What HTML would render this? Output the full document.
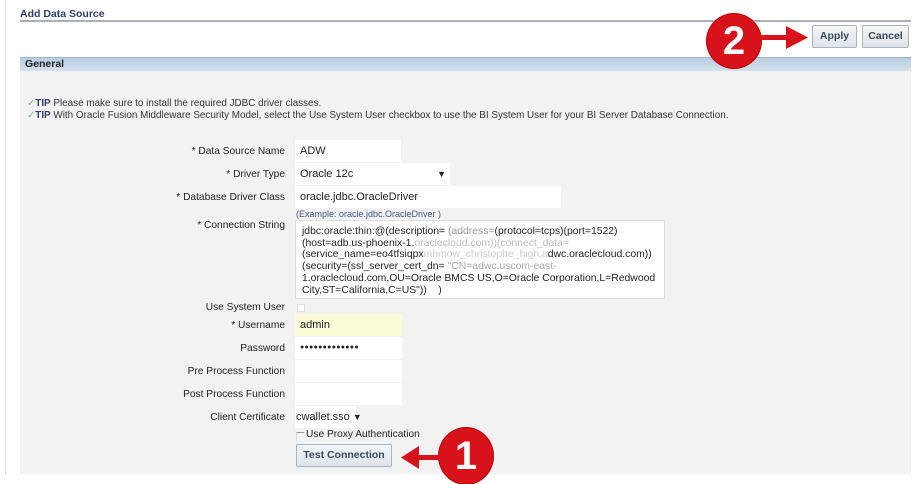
<!DOCTYPE html>
<html><head><meta charset="utf-8"><style>
*{margin:0;padding:0;box-sizing:border-box}
body{width:919px;height:482px;background:#fff;font-family:"Liberation Sans",sans-serif;font-size:10.5px;color:#222;position:relative;overflow:hidden}
.a{position:absolute}
.lbl{position:absolute;right:634px;text-align:right;white-space:nowrap;font-size:10.2px}
.inp{position:absolute;background:#fff;left:295px;height:22px;font-size:11px;padding:0 0 0 5px;line-height:22px;white-space:nowrap}
.btn{position:absolute;border:1px solid #a9b3bd;border-radius:2px;background:linear-gradient(#f4f6f8,#dfe4ea);font-weight:bold;color:#3a4a5a;font-size:10.5px;text-align:center}
.circ{position:absolute;border-radius:50%;background:#d8121b;color:#fff;font-family:"Liberation Sans",sans-serif;font-weight:bold;font-size:40px;text-align:center;box-shadow:0 0 0 1px #b00}
</style></head><body>
<div class="a" style="left:5px;top:0;width:1px;height:475px;background:#e3e3e3"></div>
<div class="a" style="left:20px;top:8px;font-weight:bold;color:#2c3e6b;font-size:10.5px">Add Data Source</div>
<div class="a" style="left:20px;top:20px;width:891px;height:2px;background:#aab0b8"></div>
<div class="btn" style="left:812px;top:25px;width:45px;height:23px;line-height:21px">Apply</div>
<div class="btn" style="left:862px;top:25px;width:47px;height:23px;line-height:21px">Cancel</div>
<div class="a" style="left:20px;top:70px;width:891px;height:404px;background:#f2f2f2"></div>
<div class="a" style="left:20px;top:57px;width:891px;height:14px;background:linear-gradient(#b9cde1,#d4e1ee);border-top:1px solid #9fb4ca;font-weight:bold;font-size:10.5px;padding-left:5px;line-height:13px;color:#222">General</div>
<div class="a" style="left:27px;top:98px;font-size:9.9px;line-height:12px;color:#333;white-space:nowrap"><span style="color:#7fc06a">✓</span><b style="color:#2c3e6b">TIP</b> Please make sure to install the required JDBC driver classes.<br><span style="color:#7fc06a">✓</span><b style="color:#2c3e6b">TIP</b> With Oracle Fusion Middleware Security Model, select the Use System User checkbox to use the BI System User for your BI Server Database Connection.</div>

<div class="lbl" style="top:146px">* Data Source Name</div>
<div class="inp" style="top:140px;width:106px">ADW</div>
<div class="lbl" style="top:169px">* Driver Type</div>
<div class="inp" style="top:163px;width:155px">Oracle 12c<span style="position:absolute;right:4px;font-size:9px">▼</span></div>
<div class="lbl" style="top:192px">* Database Driver Class</div>
<div class="inp" style="top:186px;width:266px">oracle.jdbc.OracleDriver</div>
<div class="a" style="left:296px;top:209px;font-size:9px;color:#3f5a8a">(Example: oracle.jdbc.OracleDriver )</div>
<div class="lbl" style="top:220px">* Connection String</div>
<div class="a" style="left:295px;top:220px;width:370px;height:79px;background:#fff;border:1px solid #ddd;font-size:10.4px;line-height:11.7px;padding:5px 0 0 6px;white-space:nowrap;overflow:hidden">jdbc:oracle:thin:@(description= <span style="color:#999">(address=</span>(protocol=tcps)(port=1522)<br>(host=adb.us-phoenix-1.<span style="color:#bbb">oraclecloud.com))(connect_data=</span><br>(service_name=eo4tfsiqpx<span style="color:#ccc">mhmow_christophe_high.a</span>dwc.oraclecloud.com))<br>(security=(ssl_server_cert_dn= <span style="color:#aaa">"CN=adwc.uscom-east-</span><br>1.oraclecloud.com,OU=Oracle BMCS US,O=Oracle Corporation,L=Redwood<br>City,ST=California,C=US"))&nbsp;&nbsp;&nbsp;&nbsp;)</div>
<div class="lbl" style="top:302px">Use System User</div>
<div class="a" style="left:297px;top:304px;width:8px;height:8px;border:1px solid #ddd;background:#fff"></div>
<div class="lbl" style="top:320px">* Username</div>
<div class="inp" style="top:314px;width:107px;background:#fbfbd8">admin</div>
<div class="lbl" style="top:343px">Password</div>
<div class="inp" style="top:337px;width:107px;font-size:7px;letter-spacing:0.3px">●●●●●●●●●●●●●</div>
<div class="lbl" style="top:366px">Pre Process Function</div>
<div class="inp" style="top:360px;width:107px"></div>
<div class="lbl" style="top:389px">Post Process Function</div>
<div class="inp" style="top:383px;width:107px"></div>
<div class="lbl" style="top:412px">Client Certificate</div>
<div class="inp" style="top:406px;width:61px;padding-left:1px">cwallet.sso <span style="font-size:9px">▼</span></div>
<div class="a" style="left:296px;top:432px;width:8px;height:9px;border-top:1px solid #999;border-left:1px solid #ddd"></div>
<div class="a" style="left:306px;top:429px;font-size:10.2px">Use Proxy Authentication</div>
<div class="btn" style="left:296px;top:444px;width:96px;height:23px;line-height:21px">Test Connection</div>

<div class="circ" style="left:707px;top:14px;width:54px;height:54px;line-height:54px">2</div>
<svg class="a" style="left:758px;top:26px" width="52" height="24"><rect x="0" y="9" width="30" height="5" fill="#d8121b"/><polygon points="28,0 50,11.5 28,23" fill="#d8121b"/></svg>
<div class="circ" style="left:439px;top:428px;width:54px;height:56px;line-height:56px">1</div>
<svg class="a" style="left:401px;top:446px" width="42" height="24"><rect x="16" y="9" width="26" height="5" fill="#d8121b"/><polygon points="18,0 0,11.5 18,23" fill="#d8121b"/></svg>
</body></html>
